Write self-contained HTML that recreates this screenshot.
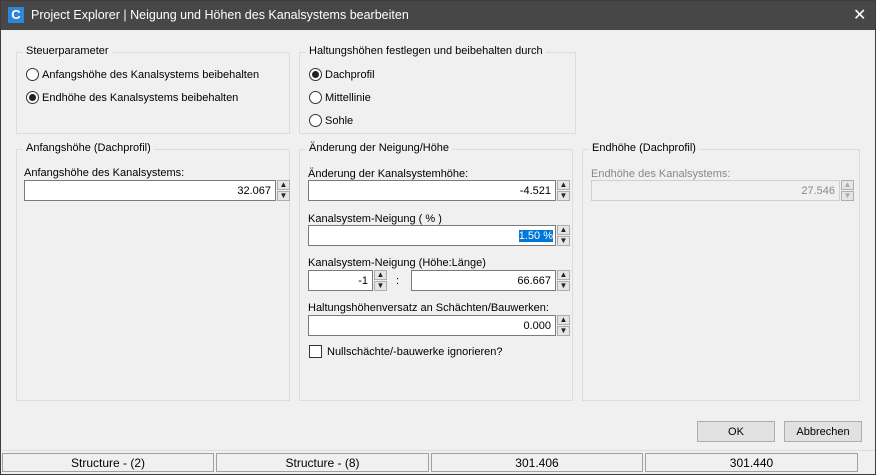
<!DOCTYPE html>
<html><head><style>
*{box-sizing:border-box;margin:0;padding:0}
body{width:876px;height:475px;background:#f0f0f0;font-family:"Liberation Sans",sans-serif;font-size:11px;color:#000;position:relative;overflow:hidden}
.abs{position:absolute}
.t{position:absolute;margin-top:1px}
.title{left:0;top:0;width:876px;height:30px;background:#474747;color:#fff;font-size:12.5px}
.grp{position:absolute;border:1px solid #dcdcdc}
.gl{position:absolute;top:-8px;left:6px;background:#f0f0f0;padding:0 3px;white-space:nowrap}
.rad{position:absolute;width:13px;height:13px;border:1px solid #333;border-radius:50%;background:#fff}
.rad.on::after{content:"";position:absolute;left:2px;top:2px;width:7px;height:7px;border-radius:50%;background:#222}
.inp{position:absolute;height:21px;border:1px solid #7a7a7a;background:#fff;text-align:right;padding-right:4px;line-height:20px}
.inp.dis{background:#f0f0f0;border-color:#cfcfcf;color:#888}
.spin{position:absolute;width:13px;height:21px}
.spin div{height:10px;border:1px solid #adadad;background:#e5e5e5;font-size:8px;line-height:8px;text-align:center;color:#222}
.spin div+div{margin-top:1px}
.btn{position:absolute;height:21px;border:1px solid #adadad;background:#e1e1e1;text-align:center;line-height:20px}
.sb{position:absolute;top:453px;height:19px;border:1px solid #a0a0a0;text-align:center;line-height:18px;font-size:12px}
</style></head><body>
<div class="abs" style="left:0;top:0;width:876px;height:475px;border:1px solid #3c3c3c;z-index:5;pointer-events:none"></div>
<div class="abs title">
<div class="abs" style="left:8px;top:7px;width:16px;height:16px;background:#2e86d6;color:#fff;font-weight:bold;font-size:13px;line-height:16px;text-align:center">C</div>
<div class="abs" style="left:31px;top:8px">Project Explorer | Neigung und Höhen des Kanalsystems bearbeiten</div>
<div class="abs" style="left:853px;top:5px;font-size:16px">✕</div>
</div>

<div class="grp" style="left:16px;top:52px;width:274px;height:82px"><div class="gl">Steuerparameter</div></div>
<div class="rad" style="left:26px;top:68px"></div><div class="t" style="left:42px;top:68px">Anfangshöhe des Kanalsystems beibehalten</div>
<div class="rad on" style="left:26px;top:91px"></div><div class="t" style="left:42px;top:91px">Endhöhe des Kanalsystems beibehalten</div>

<div class="grp" style="left:299px;top:52px;width:277px;height:82px"><div class="gl">Haltungshöhen festlegen und beibehalten durch</div></div>
<div class="rad on" style="left:309px;top:68px"></div><div class="t" style="left:325px;top:68px">Dachprofil</div>
<div class="rad" style="left:309px;top:91px"></div><div class="t" style="left:325px;top:91px">Mittellinie</div>
<div class="rad" style="left:309px;top:114px"></div><div class="t" style="left:325px;top:114px">Sohle</div>

<div class="grp" style="left:16px;top:149px;width:274px;height:252px"><div class="gl">Anfangshöhe (Dachprofil)</div></div>
<div class="t" style="left:24px;top:166px">Anfangshöhe des Kanalsystems:</div>
<div class="inp" style="left:24px;top:180px;width:252px">32.067</div>
<div class="spin" style="left:277px;top:180px"><div>▲</div><div>▼</div></div>

<div class="grp" style="left:299px;top:149px;width:274px;height:252px"><div class="gl">Änderung der Neigung/Höhe</div></div>
<div class="t" style="left:308px;top:167px">Änderung der Kanalsystemhöhe:</div>
<div class="inp" style="left:308px;top:180px;width:248px">-4.521</div>
<div class="spin" style="left:557px;top:180px"><div>▲</div><div>▼</div></div>
<div class="t" style="left:308px;top:212px">Kanalsystem-Neigung ( % )</div>
<div class="inp" style="left:308px;top:225px;width:248px;padding-right:2px"><span style="background:#0078d7;color:#fff">1.50 %</span></div>
<div class="spin" style="left:557px;top:225px"><div>▲</div><div>▼</div></div>
<div class="t" style="left:308px;top:256px">Kanalsystem-Neigung (Höhe:Länge)</div>
<div class="inp" style="left:308px;top:270px;width:65px">-1</div>
<div class="spin" style="left:374px;top:270px"><div>▲</div><div>▼</div></div>
<div class="t" style="left:396px;top:274px">:</div>
<div class="inp" style="left:411px;top:270px;width:145px">66.667</div>
<div class="spin" style="left:557px;top:270px"><div>▲</div><div>▼</div></div>
<div class="t" style="left:308px;top:301px">Haltungshöhenversatz an Schächten/Bauwerken:</div>
<div class="inp" style="left:308px;top:315px;width:248px">0.000</div>
<div class="spin" style="left:557px;top:315px"><div>▲</div><div>▼</div></div>
<div class="abs" style="left:309px;top:345px;width:13px;height:13px;border:1px solid #333;background:#fff"></div>
<div class="t" style="left:327px;top:345px">Nullschächte/-bauwerke ignorieren?</div>

<div class="grp" style="left:582px;top:149px;width:278px;height:252px"><div class="gl">Endhöhe (Dachprofil)</div></div>
<div class="t" style="left:591px;top:167px;color:#888">Endhöhe des Kanalsystems:</div>
<div class="inp dis" style="left:591px;top:180px;width:249px">27.546</div>
<div class="spin" style="left:841px;top:180px"><div style="color:#aaa">▲</div><div style="color:#aaa">▼</div></div>

<div class="btn" style="left:697px;top:421px;width:78px">OK</div>
<div class="btn" style="left:784px;top:421px;width:78px">Abbrechen</div>
<div class="abs" style="left:0;top:450px;width:876px;border-top:1px solid #dcdcdc"></div>
<div class="sb" style="left:2px;width:212px">Structure - (2)</div>
<div class="sb" style="left:216px;width:213px">Structure - (8)</div>
<div class="sb" style="left:431px;width:212px">301.406</div>
<div class="sb" style="left:645px;width:213px">301.440</div>
</body></html>
